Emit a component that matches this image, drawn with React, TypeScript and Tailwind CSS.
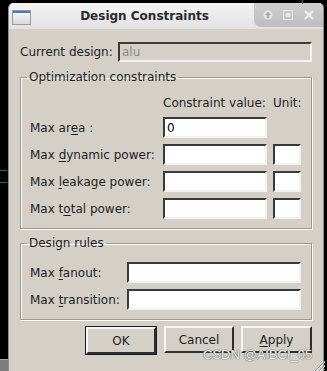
import React from "react";

const entry =
  "h-[21px] bg-white border-2 border-t-[#3a3a3a] border-l-[#3a3a3a] border-r-[#f2f2f2] border-b-[#f2f2f2]";

const raised =
  "flex items-center justify-center h-[27px] border-2 border-t-[#f6f6f4] border-l-[#f6f6f4] border-r-[#2e2e2e] border-b-[#2e2e2e] bg-[#d4d0c8] text-[12px] text-[#1e1e1e]";

function U({ children }: { children: React.ReactNode }) {
  return <span className="underline decoration-1 underline-offset-[2px]">{children}</span>;
}

function Group({ title, children, className }: { title: string; children: React.ReactNode; className?: string }) {
  return (
    <fieldset
      className={
        "border border-[#9c9891] shadow-[inset_1px_1px_0_#fbfbf9,1px_1px_0_#fbfbf9] px-[9px] pb-[9px] " +
        (className ?? "")
      }
    >
      <legend className="-ml-[3px] px-[2px] text-[12px] leading-[14px] text-[#1e1e1e]">{title}</legend>
      {children}
    </fieldset>
  );
}

function PowerRow({ label }: { label: React.ReactNode }) {
  return (
    <div className="mt-[6px] flex items-center">
      <div className="w-[133px] text-[12px] text-[#1e1e1e]">{label}</div>
      <div className={entry + " w-[104px]"} />
      <div className={entry + " w-[28px] ml-[6px]"} />
    </div>
  );
}

export default function App() {
  return (
    <div
      className="relative w-[327px] h-[371px] overflow-hidden bg-black"
      style={{ fontFamily: '"DejaVu Sans", sans-serif' }}
    >
      {/* stray desktop bits */}
      <div className="absolute left-0 top-[170px] w-[7px] h-px bg-[#0a8a0a]" />
      <div className="absolute left-0 top-[182px] w-[7px] h-px bg-[#0a8a0a]" />
      <div className="absolute left-[302px] top-0 w-px h-[4px] bg-[#0a8a0a]" />
      <div className="absolute left-0 top-[359px] w-[8px] h-[12px] bg-[#7d7d7d] border-t border-[#a8a8a8]" />

      <div className="ml-[8px] mt-[3px] w-[316px] h-[368px] flex flex-col rounded-t-[5px] overflow-hidden border-x border-[#8e8e8e]">
        {/* title bar */}
        <div className="h-[26px] flex items-start bg-gradient-to-b from-[#f4f4f4] to-[#e2e2e2]">
          <div className="mt-[7px] ml-[3px] w-[19px] h-[15px] border border-[#9a9a9a] bg-gradient-to-b from-[#fafafa] to-[#dadada]">
            <div className="h-[2px] bg-[#4a78b8]" />
          </div>
          <div className="flex-1 pt-[6px] pl-[4px] text-center text-[12px] font-bold leading-[14px] text-[#2a2a2a]">
            Design Constraints
          </div>
          <div className="w-[69px] h-[24px] rounded-bl-[7px] bg-gradient-to-b from-[#cfcfcf] to-[#bdbdbd] flex items-center justify-around px-[4px]">
            <svg width="10" height="10" viewBox="0 0 10 10">
              <circle cx="5" cy="5" r="4.5" fill="#e6e6e6" />
              <path d="M5 1.8 L8 5 H6.2 V8.2 H3.8 V5 H2 Z" fill="#a9a9a9" />
            </svg>
            <svg width="10" height="10" viewBox="0 0 10 10">
              <rect x="0.5" y="0.5" width="9" height="9" fill="none" stroke="#e6e6e6" />
              <rect x="2.5" y="3" width="5" height="4" fill="#e6e6e6" />
            </svg>
            <svg width="10" height="10" viewBox="0 0 10 10">
              <path d="M1 1 L9 9 M9 1 L1 9" stroke="#eeeeee" strokeWidth="2.4" />
            </svg>
          </div>
        </div>

        {/* body */}
        <div className="flex-1 bg-[#d4d0c8] px-[11px] pt-[13px]">
          <div className="flex items-center h-[20px]">
            <div className="text-[12px] text-[#1e1e1e]">Current design:</div>
            <div className="ml-auto w-[194px] h-[20px] border-2 border-t-[#3a3a3a] border-l-[#3a3a3a] border-r-[#f2f2f2] border-b-[#f2f2f2] flex items-center pl-[2px] text-[12px] text-[#8c8c8c]">
              alu
            </div>
          </div>

          <Group title="Optimization constraints" className="mt-[8px]">
            <div className="mt-[12px] flex text-[12px] leading-[14px] text-[#1e1e1e]">
              <div className="w-[133px]" />
              <div className="w-[110px]">Constraint value:</div>
              <div>Unit:</div>
            </div>
            <div className="mt-[7px] flex items-center">
              <div className="w-[133px] text-[12px] text-[#1e1e1e]">
                Max ar<U>e</U>a :
              </div>
              <div className={entry + " w-[104px] flex items-center pl-[2px] text-[12px] text-black"}>0</div>
            </div>
            <PowerRow label={<>Max <U>d</U>ynamic power:</>} />
            <PowerRow label={<>Max <U>l</U>eakage power:</>} />
            <PowerRow label={<>Max t<U>o</U>tal power:</>} />
          </Group>

          <Group title="Design rules" className="mt-[7px]">
            <div className="mt-[12px] flex items-center">
              <div className="w-[97px] text-[12px] text-[#1e1e1e]">
                Max <U>f</U>anout:
              </div>
              <div className={entry + " w-[174px]"} />
            </div>
            <div className="mt-[6px] flex items-center">
              <div className="w-[97px] text-[12px] text-[#1e1e1e]">
                Max <U>t</U>ransition:
              </div>
              <div className={entry + " w-[174px]"} />
            </div>
          </Group>

          <div className="mt-[6px] flex justify-end gap-[7px]">
            <div className="border border-[#1a1a1a]">
              <div className={raised + " w-[70px] h-[25px]"}>OK</div>
            </div>
            <div className={raised + " w-[70px]"}>Cancel</div>
            <div className={raised + " w-[71px]"}>
              <U>A</U>pply
            </div>
          </div>
        </div>
      </div>

      {/* watermark */}
      <div
        className="absolute left-[203px] top-[348px] text-[13px] leading-[14px] text-[#f4f4f4] [text-shadow:0_0_1px_#6a6a6a,0_0_1px_#6a6a6a,0_0_1px_#6a6a6a]"
        style={{ fontFamily: '"Liberation Sans", sans-serif' }}
      >
        CSDN @AIBCI_05
      </div>

      {/* resize grip */}
      <svg className="absolute left-[312px] top-[358px]" width="14" height="14" viewBox="0 0 14 14">
        <path d="M13 3 L3 13 M13 7 L7 13 M13 11 L11 13" stroke="#8a8a8a" strokeWidth="1" />
        <path d="M13 4 L4 13 M13 8 L8 13" stroke="#f4f4f4" strokeWidth="1" />
      </svg>
    </div>
  );
}
